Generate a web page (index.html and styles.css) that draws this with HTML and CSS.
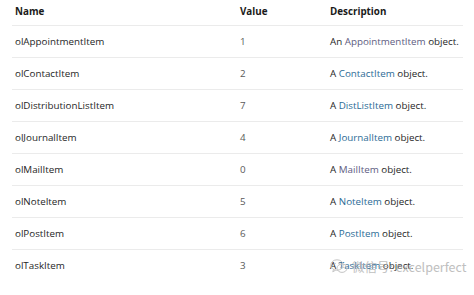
FILE: index.html
```html
<!DOCTYPE html>
<html>
<head>
<meta charset="utf-8">
<link rel="stylesheet" href="styles.css">
</head>
<body>
<table class="enum">
  <colgroup><col class="c-name"><col class="c-val"><col class="c-desc"></colgroup>
  <thead>
    <tr><th>Name</th><th>Value</th><th>Description</th></tr>
  </thead>
  <tbody>
    <tr><td>olAppointmentItem</td><td class="num">1</td><td>An <a class="visited">AppointmentItem</a> object.</td></tr>
    <tr><td>olContactItem</td><td class="num">2</td><td>A <a>ContactItem</a> object.</td></tr>
    <tr><td>olDistributionListItem</td><td class="num">7</td><td>A <a>DistListItem</a> object.</td></tr>
    <tr><td>olJournalItem</td><td class="num">4</td><td>A <a>JournalItem</a> object.</td></tr>
    <tr><td>olMailItem</td><td class="num">0</td><td>A <a class="visited">MailItem</a> object.</td></tr>
    <tr><td>olNoteItem</td><td class="num">5</td><td>A <a>NoteItem</a> object.</td></tr>
    <tr><td>olPostItem</td><td class="num">6</td><td>A <a>PostItem</a> object.</td></tr>
    <tr><td>olTaskItem</td><td class="num">3</td><td>A <a>TaskItem</a> object.</td></tr>
  </tbody>
</table>
<div class="watermark">
  <svg class="wm-icon" width="18" height="15" viewBox="0 0 18 15">
    <ellipse cx="7" cy="6" rx="6.2" ry="5.2" fill="none" stroke="#c4c4c4" stroke-width="1"/>
    <path d="M3.5 10.3 L2.8 12.8 L5.6 11.2" fill="none" stroke="#c4c4c4" stroke-width="1"/>
    <ellipse cx="12" cy="9.2" rx="5" ry="4.2" fill="none" stroke="#c4c4c4" stroke-width="1"/>
    <circle cx="5" cy="4.5" r="0.8" fill="#c4c4c4"/>
    <circle cx="9" cy="4.5" r="0.8" fill="#c4c4c4"/>
    <circle cx="10.5" cy="8.5" r="0.6" fill="#c4c4c4"/>
    <circle cx="13.5" cy="8.5" r="0.6" fill="#c4c4c4"/>
  </svg>
  <span class="wm-text">微信号: excelperfect</span>
</div>
</body>
</html>
```

FILE: styles.css
```css
html, body {
  margin: 0;
  padding: 0;
  background: #ffffff;
}
body {
  font-family: "Open Sans", "Noto Sans CJK SC", sans-serif;
  position: relative;
  width: 474px;
  height: 295px;
  overflow: hidden;
}
.enum {
  border-collapse: collapse;
  table-layout: fixed;
  margin-left: 12px;
  width: 451px;
  font-size: 9.8px;
  color: #262626;
}
.c-name { width: 225px; }
.c-val { width: 90px; }
.c-desc { width: 136px; }
.enum th {
  text-align: left;
  font-weight: 700;
  height: 23px;
  padding: 0 0 2px 3px;
  border-bottom: 1px solid #ebebeb;
  vertical-align: middle;
  color: #1a1a1a;
}
.enum td {
  height: 31px;
  padding: 0 0 0 3px;
  border-bottom: 1px solid #ebebeb;
  vertical-align: middle;
  white-space: nowrap;
}
.enum tbody tr:last-child td {
  border-bottom: none;
}
.enum td.num {
  color: #5a5a5a;
}
.enum a {
  color: #2c6b96;
  text-decoration: none;
}
.enum a.visited {
  color: #5d5b7f;
}
.watermark {
  position: absolute;
  left: 330px;
  top: 257px;
  display: flex;
  align-items: center;
  gap: 4px;
}
.wm-text {
  font-family: "Noto Sans CJK SC", "Open Sans", sans-serif;
  font-size: 12.5px;
  color: #b0b0b0;
  opacity: 0.8;
}
```
